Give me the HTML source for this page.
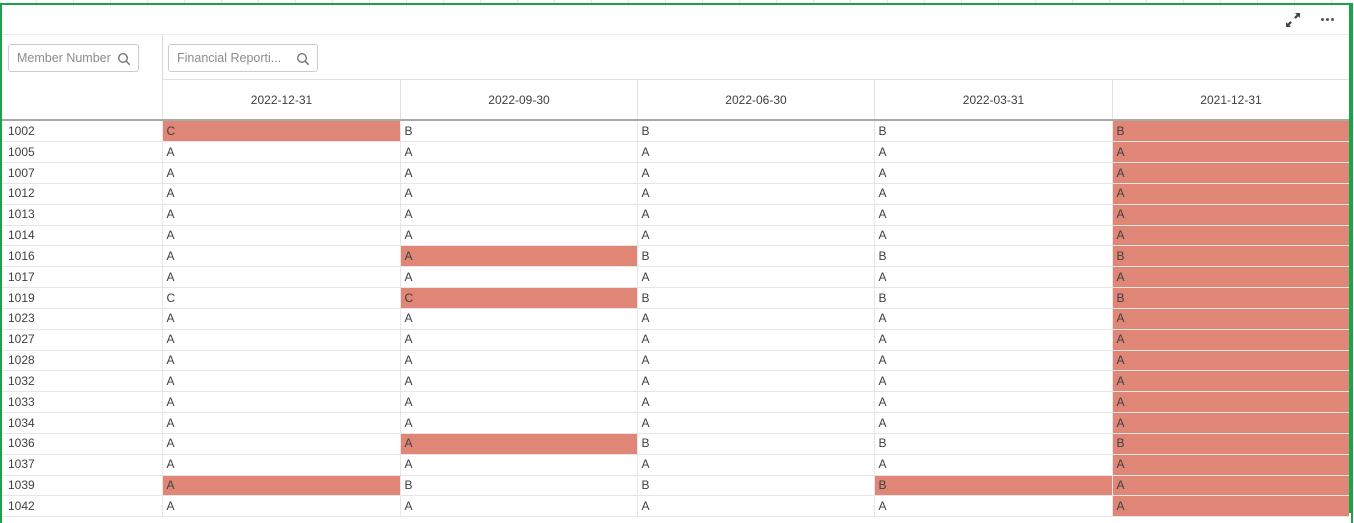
<!DOCTYPE html>
<html><head><style>
*{margin:0;padding:0;box-sizing:border-box}
body{width:1354px;height:513px;overflow:hidden;background:#fff;font-family:"Liberation Sans",sans-serif;position:relative;color:#404040}
.frame{position:absolute;left:0;top:3px;width:1353px;height:520px;border:2px solid #1aa34a;border-bottom:none}
.topgrid{position:absolute;left:0;top:0;width:1354px;height:3px;background:repeating-linear-gradient(90deg,#fff 0 36px,#e4e4e4 36px 37px)}
.hdrline{position:absolute;left:2px;top:34px;width:1347px;height:1px;background:#ececec}
.filt{position:absolute;top:44px;height:28px;border:1px solid #ccc;border-radius:3px;font-size:12.5px;color:#8c8c8c;line-height:26px;padding-left:8px}
.filt svg{position:absolute;right:7px;top:7px}
.vline{position:absolute;left:162px;top:35px;width:1px;height:480px;background:#d9d9d9}
.fline{position:absolute;left:162px;top:79px;width:1187px;height:1px;background:#e2e2e2}
.hline{position:absolute;left:2px;top:119px;width:1347px;height:2px;background:#a8a8a8}
.colh{position:absolute;top:80px;height:40px;line-height:40px;text-align:center;font-size:12px;color:#404040;border-left:1px solid #e2e2e2}
table{position:absolute;left:2px;top:121px;border-collapse:collapse;font-size:12px}
td{height:20.83px;border-bottom:1px solid #e6e6e6;border-left:1px solid #e6e6e6;padding:0 0 0 4px;vertical-align:middle;line-height:19px}
td:first-child{border-left:none;width:160px;padding-left:6px}
td.r{background:#df8677}
.dot{position:absolute;top:18px;width:3px;height:3px;border-radius:50%;background:#555}
</style></head><body>
<div class="topgrid"></div>
<div class="frame"></div>
<div class="hdrline"></div>
<svg style="position:absolute;left:1284px;top:11px" width="18" height="18" viewBox="0 0 18 18"><path d="M11 2h5v5l-1.7-1.7-2.6 2.6-1.6-1.6 2.6-2.6z M7 16H2v-5l1.7 1.7 2.6-2.6 1.6 1.6-2.6 2.6z" fill="#444"/></svg>
<div class="dot" style="left:1321px"></div><div class="dot" style="left:1326px"></div><div class="dot" style="left:1331px"></div>
<div class="filt" style="left:8px;width:131px">Member Number<svg width="14" height="14" viewBox="0 0 14 14"><circle cx="6" cy="6" r="4.3" fill="none" stroke="#777" stroke-width="1.4"/><path d="M9.2 9.2l3.5 3.5" stroke="#777" stroke-width="1.5"/></svg></div>
<div class="filt" style="left:168px;width:150px">Financial Reporti...<svg width="14" height="14" viewBox="0 0 14 14"><circle cx="6" cy="6" r="4.3" fill="none" stroke="#777" stroke-width="1.4"/><path d="M9.2 9.2l3.5 3.5" stroke="#777" stroke-width="1.5"/></svg></div>
<div class="vline"></div><div class="fline"></div>
<div class="colh" style="left:162px;width:238px">2022-12-31</div>
<div class="colh" style="left:400px;width:237px">2022-09-30</div>
<div class="colh" style="left:637px;width:237px">2022-06-30</div>
<div class="colh" style="left:874px;width:238px">2022-03-31</div>
<div class="colh" style="left:1112px;width:237px">2021-12-31</div>
<table>
<colgroup><col style="width:160px"><col style="width:238px"><col style="width:237px"><col style="width:237px"><col style="width:238px"><col style="width:237px"></colgroup>
<tr><td>1002</td><td class="r">C</td><td>B</td><td>B</td><td>B</td><td class="r">B</td></tr>
<tr><td>1005</td><td>A</td><td>A</td><td>A</td><td>A</td><td class="r">A</td></tr>
<tr><td>1007</td><td>A</td><td>A</td><td>A</td><td>A</td><td class="r">A</td></tr>
<tr><td>1012</td><td>A</td><td>A</td><td>A</td><td>A</td><td class="r">A</td></tr>
<tr><td>1013</td><td>A</td><td>A</td><td>A</td><td>A</td><td class="r">A</td></tr>
<tr><td>1014</td><td>A</td><td>A</td><td>A</td><td>A</td><td class="r">A</td></tr>
<tr><td>1016</td><td>A</td><td class="r">A</td><td>B</td><td>B</td><td class="r">B</td></tr>
<tr><td>1017</td><td>A</td><td>A</td><td>A</td><td>A</td><td class="r">A</td></tr>
<tr><td>1019</td><td>C</td><td class="r">C</td><td>B</td><td>B</td><td class="r">B</td></tr>
<tr><td>1023</td><td>A</td><td>A</td><td>A</td><td>A</td><td class="r">A</td></tr>
<tr><td>1027</td><td>A</td><td>A</td><td>A</td><td>A</td><td class="r">A</td></tr>
<tr><td>1028</td><td>A</td><td>A</td><td>A</td><td>A</td><td class="r">A</td></tr>
<tr><td>1032</td><td>A</td><td>A</td><td>A</td><td>A</td><td class="r">A</td></tr>
<tr><td>1033</td><td>A</td><td>A</td><td>A</td><td>A</td><td class="r">A</td></tr>
<tr><td>1034</td><td>A</td><td>A</td><td>A</td><td>A</td><td class="r">A</td></tr>
<tr><td>1036</td><td>A</td><td class="r">A</td><td>B</td><td>B</td><td class="r">B</td></tr>
<tr><td>1037</td><td>A</td><td>A</td><td>A</td><td>A</td><td class="r">A</td></tr>
<tr><td>1039</td><td class="r">A</td><td>B</td><td>B</td><td class="r">B</td><td class="r">A</td></tr>
<tr><td>1042</td><td>A</td><td>A</td><td>A</td><td>A</td><td class="r">A</td></tr>
</table>
<div class="hline"></div>
<div style="position:absolute;left:1349px;top:3px;width:3px;height:510px;background:#1aa34a"></div>
</body></html>
